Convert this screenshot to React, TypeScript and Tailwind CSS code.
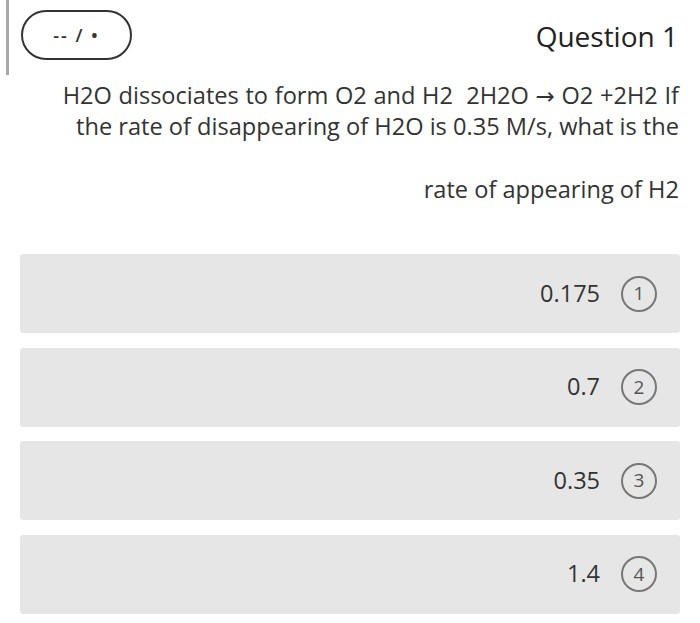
import React from "react";

const options = [
  { v: "0.175", n: "1" },
  { v: "0.7", n: "2" },
  { v: "0.35", n: "3" },
  { v: "1.4", n: "4" },
];

export default function App() {
  return (
    <div
      className="w-[700px] h-[623px] bg-white overflow-hidden text-[#333]"
      style={{ fontFamily: '"Open Sans", "Noto Sans", sans-serif' }}
    >
      <div className="flex items-start h-[80px]">
        <div className="ml-[6px] w-[3px] h-[75px] bg-[#a8a8a8]" />
        <div className="ml-[12px] mt-[10px] w-[111px] h-[50px] rounded-full border-2 border-[#333] flex items-center justify-center text-[18px] font-semibold text-[#333] tracking-[2px]">
          -- / •
        </div>
        <div className="ml-auto mr-[22px] mt-[17px] text-[28px] leading-[38px] font-medium text-[#222]">
          Question 1
        </div>
      </div>
      <div className="pr-[21px] text-right text-[23.6px] leading-[31px] text-[#333]">
        <p className="[word-spacing:0.5px]">
          H2O dissociates to form O2 and H2&nbsp; 2H2O{" "}
          <span style={{ fontFamily: '"DejaVu Sans", sans-serif' }} className="text-[23px] leading-none">
            →
          </span>{" "}
          O2 +2H2 If
        </p>
        <p>the rate of disappearing of H2O is 0.35 M/s, what is the</p>
        <p className="mt-[32px]">rate of appearing of H2</p>
      </div>
      <div className="mt-[49px] ml-[20px] w-[660px] flex flex-col gap-[14.5px]">
        {options.map((o) => (
          <div
            key={o.n}
            className="h-[79px] rounded-[3px] bg-[#e6e6e6] flex items-center justify-end pr-[23px]"
          >
            <span className="text-[23.5px] text-[#333]">{o.v}</span>
            <span className="ml-[21px] w-[36px] h-[36px] rounded-full border-2 border-[#777] flex items-center justify-center text-[19px] text-[#555]">
              {o.n}
            </span>
          </div>
        ))}
      </div>
    </div>
  );
}
